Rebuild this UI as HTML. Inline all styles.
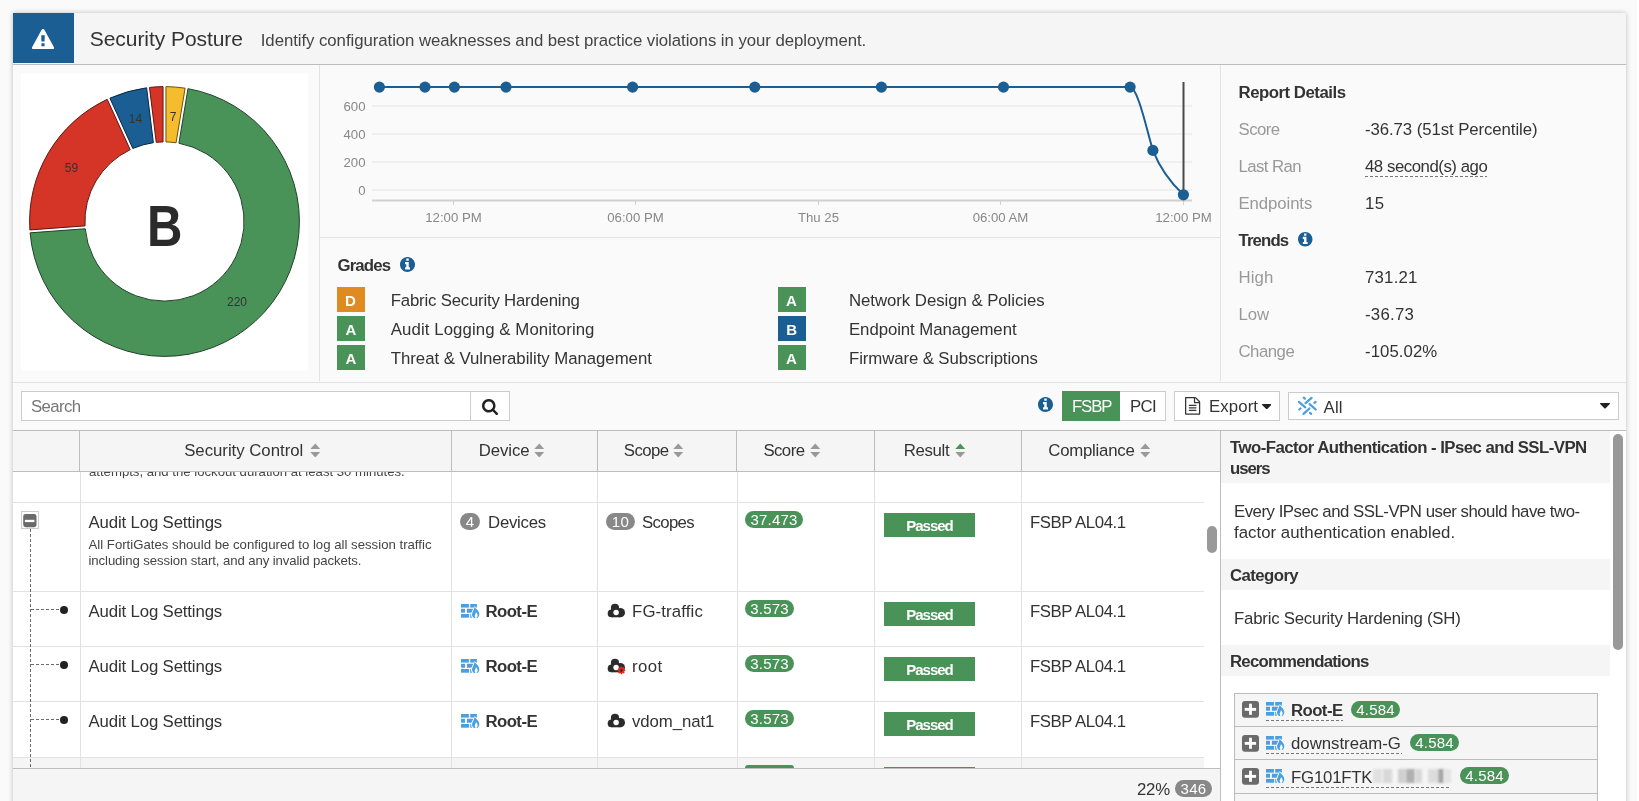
<!DOCTYPE html>
<html lang="en"><head><meta charset="utf-8"><title>Security Posture</title><style>
html,body{margin:0;padding:0;}
body{width:1639px;height:801px;overflow:hidden;background:#fafafa;font-family:"Liberation Sans",sans-serif;font-size:16.8px;color:#333;position:relative;}
.a{position:absolute;box-sizing:border-box;display:block;}
.t{position:absolute;white-space:nowrap;line-height:1;display:block;}
#w{position:absolute;left:0;top:0;width:1639px;height:801px;will-change:transform;}
</style></head>
<body>
<div id="w">
<div class="a" style="left:1637px;top:0px;width:2px;height:801px;background:#fff;"></div>
<div class="a" style="left:13px;top:13px;width:1613px;height:800px;background:#fafafa;box-shadow:0 0 5px rgba(0,0,0,.25);"></div>
<div class="a" style="left:13px;top:13px;width:1613px;height:51px;background:#f5f5f5;"></div>
<div class="a" style="left:13px;top:64px;width:1613px;height:1px;background:#bdbdbd;"></div>
<div class="a" style="left:13px;top:13px;width:61px;height:50px;background:#1a5e93;"></div>
<svg class="a" style="left:32px;top:29px;" width="22.00" height="20.43" viewBox="0 0 22.00 20.43"><path fill="#fff" transform="translate(-0.001,18.859) scale(0.01228,-0.01228)" d="M1024 161C1024 143 1010 128 992 128H800C782 128 768 143 768 161V351C768 369 782 384 800 384H992C1010 384 1024 369 1024 351V161ZM1022 535C1021 522 1006 512 988 512H803C784 512 769 522 769 535L752 992C752 998 755 1008 762 1013C768 1018 777 1024 786 1024H1006C1015 1024 1024 1018 1030 1013C1037 1008 1040 1000 1040 994ZM1008 1469C986 1510 943 1536 896 1536C849 1536 806 1510 784 1469L16 61C-6 22 -5 -26 18 -65C41 -104 83 -128 128 -128H1664C1709 -128 1751 -104 1774 -65C1797 -26 1798 22 1776 61Z"/></svg>
<span class="t" style="left:89.75px;top:28.00px;font-size:21px;letter-spacing:-0.055px;">Security Posture</span>
<span class="t" style="left:260.75px;top:33.00px;color:#444;letter-spacing:-0.056px;">Identify configuration weaknesses and best practice violations in your deployment.</span>
<div class="a" style="left:21px;top:73px;width:287px;height:298px;background:#fff;"></div>
<svg class="a" style="left:21px;top:73px;" width="287" height="297" viewBox="0 0 287 297"><path d="M144.95 13.61A134.9 134.9 0 0 1 164.10 15.18L155.07 69.75A79.6 79.6 0 0 0 144.95 68.91Z" fill="#f5bd2d" stroke="#6b520a" stroke-width="1"/><path d="M166.96 15.66A134.9 134.9 0 1 1 9.08 159.83L64.23 155.77A79.6 79.6 0 1 0 157.93 70.22Z" fill="#4a9358" stroke="#23402a" stroke-width="1"/><path d="M8.86 156.93A134.9 134.9 0 0 1 86.24 26.35L109.18 76.68A79.6 79.6 0 0 0 64.02 152.88Z" fill="#d43527" stroke="#5e1710" stroke-width="1"/><path d="M88.88 25.15A134.9 134.9 0 0 1 125.62 14.79L132.36 69.68A79.6 79.6 0 0 0 111.82 75.48Z" fill="#1a5e93" stroke="#0b2840" stroke-width="1"/><path d="M128.50 14.44A134.9 134.9 0 0 1 142.05 13.61L142.05 68.91A79.6 79.6 0 0 0 135.24 69.33Z" fill="#d43527" stroke="#5e1710" stroke-width="1"/></svg>
<span class="t" style="left:144.41px;top:198.00px;font-size:57px;font-weight:700;color:#2b2b2b;letter-spacing:0.000px;transform:scaleX(0.86);">B</span>
<span class="t" style="left:169.66px;top:111.00px;font-size:12px;letter-spacing:0.000px;">7</span>
<span class="t" style="left:128.82px;top:113.00px;font-size:12px;letter-spacing:0.000px;">14</span>
<span class="t" style="left:64.82px;top:162.00px;font-size:12px;letter-spacing:0.000px;">59</span>
<span class="t" style="left:226.98px;top:296.00px;font-size:12px;letter-spacing:0.000px;">220</span>
<div class="a" style="left:319px;top:65px;width:1px;height:316px;background:#e2e2e2;"></div>
<div class="a" style="left:1220px;top:65px;width:1px;height:316px;background:#e2e2e2;"></div>
<div class="a" style="left:320px;top:237px;width:900px;height:1px;background:#e2e2e2;"></div>
<div class="a" style="left:13px;top:382px;width:1613px;height:1px;background:#e2e2e2;"></div>
<svg class="a" style="left:320px;top:65px;" width="900" height="172" viewBox="0 0 900 172"><line x1="52" x2="872" y1="41" y2="41" stroke="#e4e4e4" stroke-width="1"/><line x1="52" x2="872" y1="69" y2="69" stroke="#e4e4e4" stroke-width="1"/><line x1="52" x2="872" y1="97" y2="97" stroke="#e4e4e4" stroke-width="1"/><line x1="52" x2="872" y1="125" y2="125" stroke="#e4e4e4" stroke-width="1"/><line x1="52" x2="872" y1="135.5" y2="135.5" stroke="#d0d0d0" stroke-width="2"/><line x1="133.5" x2="133.5" y1="136" y2="140" stroke="#d0d0d0" stroke-width="1"/><line x1="315.5" x2="315.5" y1="136" y2="140" stroke="#d0d0d0" stroke-width="1"/><line x1="498.5" x2="498.5" y1="136" y2="140" stroke="#d0d0d0" stroke-width="1"/><line x1="680.5" x2="680.5" y1="136" y2="140" stroke="#d0d0d0" stroke-width="1"/><line x1="863.5" x2="863.5" y1="136" y2="140" stroke="#d0d0d0" stroke-width="1"/><line x1="863.5" x2="863.5" y1="17" y2="135" stroke="#4a4a4a" stroke-width="2"/><path d="M59.4 22.1 L105.0 22.1 L134.4 22.1 L186.0 22.1 L312.6 22.1 L434.8 22.1 L561.4 22.1 L683.5 22.1 L810.1 22.1 C818 23.5 826 62 832.9000000000001 85.4 C841 106 853 120 863.4000000000001 129.8" fill="none" stroke="#1a5e93" stroke-width="2"/><circle cx="59.4" cy="22.1" r="5.6" fill="#1a5e93"/><circle cx="105.0" cy="22.1" r="5.6" fill="#1a5e93"/><circle cx="134.4" cy="22.1" r="5.6" fill="#1a5e93"/><circle cx="186.0" cy="22.1" r="5.6" fill="#1a5e93"/><circle cx="312.6" cy="22.1" r="5.6" fill="#1a5e93"/><circle cx="434.8" cy="22.1" r="5.6" fill="#1a5e93"/><circle cx="561.4" cy="22.1" r="5.6" fill="#1a5e93"/><circle cx="683.5" cy="22.1" r="5.6" fill="#1a5e93"/><circle cx="810.1" cy="22.1" r="5.6" fill="#1a5e93"/><circle cx="832.9" cy="85.4" r="5.6" fill="#1a5e93"/><circle cx="863.4" cy="129.8" r="5.6" fill="#1a5e93"/></svg>
<span class="t" style="left:343.48px;top:100.00px;font-size:13.2px;color:#888;letter-spacing:0.000px;">600</span>
<span class="t" style="left:343.48px;top:128.00px;font-size:13.2px;color:#888;letter-spacing:0.000px;">400</span>
<span class="t" style="left:343.48px;top:156.00px;font-size:13.2px;color:#888;letter-spacing:0.000px;">200</span>
<span class="t" style="left:358.16px;top:184.00px;font-size:13.2px;color:#888;letter-spacing:0.000px;">0</span>
<span class="t" style="left:425.27px;top:211.00px;font-size:13.2px;color:#888;letter-spacing:0.000px;">12:00 PM</span>
<span class="t" style="left:607.27px;top:211.00px;font-size:13.2px;color:#888;letter-spacing:0.000px;">06:00 PM</span>
<span class="t" style="left:797.97px;top:211.00px;font-size:13.2px;color:#888;letter-spacing:0.000px;">Thu 25</span>
<span class="t" style="left:972.64px;top:211.00px;font-size:13.2px;color:#888;letter-spacing:0.000px;">06:00 AM</span>
<span class="t" style="left:1155.27px;top:211.00px;font-size:13.2px;color:#888;letter-spacing:0.000px;">12:00 PM</span>
<span class="t" style="left:337.50px;top:258.00px;font-weight:700;letter-spacing:-0.875px;">Grades</span>
<svg class="a" style="left:400px;top:257.4px;" width="15.00" height="15.00" viewBox="0 0 15.00 15.00"><path fill="#1a5e93" transform="translate(0.000,13.750) scale(0.00977,-0.00977)" d="M1024 160C1024 142 1010 128 992 128H544C526 128 512 142 512 160V320C512 338 526 352 544 352H640V672H544C526 672 512 686 512 704V864C512 882 526 896 544 896H864C882 896 896 882 896 864V352H992C1010 352 1024 338 1024 320V160ZM896 1056C896 1038 882 1024 864 1024H672C654 1024 640 1038 640 1056V1216C640 1234 654 1248 672 1248H864C882 1248 896 1234 896 1216V1056ZM1536 640C1536 1064 1192 1408 768 1408C344 1408 0 1064 0 640C0 216 344 -128 768 -128C1192 -128 1536 216 1536 640Z"/></svg>
<div class="a" style="left:337px;top:287px;width:28px;height:25px;background:#e08a22;"></div>
<span class="t" style="left:345.09px;top:293.00px;font-size:15px;font-weight:700;color:#fff;letter-spacing:0.578px;">D</span>
<span class="t" style="left:390.80px;top:293.00px;letter-spacing:-0.206px;">Fabric Security Hardening</span>
<div class="a" style="left:337px;top:316px;width:28px;height:25px;background:#4a9358;"></div>
<span class="t" style="left:345.59px;top:322.00px;font-size:15px;font-weight:700;color:#fff;letter-spacing:-0.422px;">A</span>
<span class="t" style="left:390.80px;top:322.00px;letter-spacing:0.086px;">Audit Logging &amp; Monitoring</span>
<div class="a" style="left:337px;top:345px;width:28px;height:25px;background:#4a9358;"></div>
<span class="t" style="left:345.59px;top:351.00px;font-size:15px;font-weight:700;color:#fff;letter-spacing:-0.422px;">A</span>
<span class="t" style="left:390.80px;top:351.00px;letter-spacing:-0.043px;">Threat &amp; Vulnerability Management</span>
<div class="a" style="left:777.5px;top:287px;width:28px;height:25px;background:#4a9358;"></div>
<span class="t" style="left:786.09px;top:293.00px;font-size:15px;font-weight:700;color:#fff;letter-spacing:-0.422px;">A</span>
<span class="t" style="left:849.00px;top:293.00px;letter-spacing:-0.047px;">Network Design &amp; Policies</span>
<div class="a" style="left:777.5px;top:316px;width:28px;height:25px;background:#1a5e93;"></div>
<span class="t" style="left:786.35px;top:322.00px;font-size:15px;font-weight:700;color:#fff;letter-spacing:-0.953px;">B</span>
<span class="t" style="left:849.00px;top:322.00px;letter-spacing:-0.073px;">Endpoint Management</span>
<div class="a" style="left:777.5px;top:345px;width:28px;height:25px;background:#4a9358;"></div>
<span class="t" style="left:786.09px;top:351.00px;font-size:15px;font-weight:700;color:#fff;letter-spacing:-0.422px;">A</span>
<span class="t" style="left:849.00px;top:351.00px;letter-spacing:-0.098px;">Firmware &amp; Subscriptions</span>
<span class="t" style="left:1238.50px;top:85.00px;font-weight:700;letter-spacing:-0.480px;">Report Details</span>
<span class="t" style="left:1238.50px;top:122.00px;color:#999;letter-spacing:-0.556px;">Score</span>
<span class="t" style="left:1365.00px;top:122.00px;letter-spacing:-0.083px;">-36.73 (51st Percentile)</span>
<span class="t" style="left:1238.50px;top:159.00px;color:#999;letter-spacing:-0.566px;">Last Ran</span>
<span class="t" style="left:1365.00px;top:159.00px;letter-spacing:-0.459px;">48 second(s) ago</span>
<span class="t" style="left:1238.50px;top:196.00px;color:#999;letter-spacing:-0.104px;">Endpoints</span>
<span class="t" style="left:1365.00px;top:196.00px;letter-spacing:0.398px;">15</span>
<span class="t" style="left:1238.50px;top:270.00px;color:#999;letter-spacing:0.074px;">High</span>
<span class="t" style="left:1365.00px;top:270.00px;letter-spacing:0.219px;">731.21</span>
<span class="t" style="left:1238.50px;top:307.00px;color:#999;letter-spacing:-0.073px;">Low</span>
<span class="t" style="left:1365.00px;top:307.00px;letter-spacing:0.258px;">-36.73</span>
<span class="t" style="left:1238.50px;top:344.00px;color:#999;letter-spacing:-0.510px;">Change</span>
<span class="t" style="left:1365.00px;top:344.00px;letter-spacing:0.059px;">-105.02%</span>
<div class="a" style="left:1365px;top:176px;width:122px;height:1px;background:repeating-linear-gradient(to right,#777 0 3px,transparent 3px 5px);"></div>
<span class="t" style="left:1238.50px;top:233.00px;font-weight:700;letter-spacing:-0.885px;">Trends</span>
<svg class="a" style="left:1298px;top:232px;" width="14.50" height="14.50" viewBox="0 0 14.50 14.50"><path fill="#1a5e93" transform="translate(0.000,13.292) scale(0.00944,-0.00944)" d="M1024 160C1024 142 1010 128 992 128H544C526 128 512 142 512 160V320C512 338 526 352 544 352H640V672H544C526 672 512 686 512 704V864C512 882 526 896 544 896H864C882 896 896 882 896 864V352H992C1010 352 1024 338 1024 320V160ZM896 1056C896 1038 882 1024 864 1024H672C654 1024 640 1038 640 1056V1216C640 1234 654 1248 672 1248H864C882 1248 896 1234 896 1216V1056ZM1536 640C1536 1064 1192 1408 768 1408C344 1408 0 1064 0 640C0 216 344 -128 768 -128C1192 -128 1536 216 1536 640Z"/></svg>
<div class="a" style="left:21px;top:391px;width:450px;height:30px;background:#fff;border:1px solid #ccc;"></div>
<div class="a" style="left:470px;top:391px;width:40px;height:30px;background:#fff;border:1px solid #ccc;"></div>
<span class="t" style="left:31.00px;top:399.00px;color:#777;letter-spacing:-0.628px;">Search</span>
<svg class="a" style="left:482px;top:399px;" width="16.00" height="16.00" viewBox="0 0 16.00 16.00"><path fill="#222" transform="translate(0.000,13.538) scale(0.00962,-0.00962)" d="M1152 704C1152 457 951 256 704 256C457 256 256 457 256 704C256 951 457 1152 704 1152C951 1152 1152 951 1152 704ZM1664 -128C1664 -94 1650 -61 1627 -38L1284 305C1365 422 1408 562 1408 704C1408 1093 1093 1408 704 1408C315 1408 0 1093 0 704C0 315 315 0 704 0C846 0 986 43 1103 124L1446 -218C1469 -242 1502 -256 1536 -256C1606 -256 1664 -198 1664 -128Z"/></svg>
<svg class="a" style="left:1038px;top:397px;" width="15.00" height="15.00" viewBox="0 0 15.00 15.00"><path fill="#1a5e93" transform="translate(0.000,13.750) scale(0.00977,-0.00977)" d="M1024 160C1024 142 1010 128 992 128H544C526 128 512 142 512 160V320C512 338 526 352 544 352H640V672H544C526 672 512 686 512 704V864C512 882 526 896 544 896H864C882 896 896 882 896 864V352H992C1010 352 1024 338 1024 320V160ZM896 1056C896 1038 882 1024 864 1024H672C654 1024 640 1038 640 1056V1216C640 1234 654 1248 672 1248H864C882 1248 896 1234 896 1216V1056ZM1536 640C1536 1064 1192 1408 768 1408C344 1408 0 1064 0 640C0 216 344 -128 768 -128C1192 -128 1536 216 1536 640Z"/></svg>
<div class="a" style="left:1062px;top:391px;width:58px;height:30px;background:#4a9358;"></div>
<div class="a" style="left:1120px;top:391px;width:46px;height:30px;background:#fff;border:1px solid #ccc;border-left:none;"></div>
<span class="t" style="left:1072.00px;top:399.00px;color:#fff;letter-spacing:-1.148px;">FSBP</span>
<span class="t" style="left:1130.00px;top:399.00px;letter-spacing:-0.661px;">PCI</span>
<div class="a" style="left:1174px;top:391px;width:106px;height:30px;background:#fff;border:1px solid #ccc;"></div>
<svg class="a" style="left:1185.4px;top:397.2px;" width="15.26" height="17.80" viewBox="0 0 15.26 17.80"><path fill="#333" transform="translate(0.000,15.257) scale(0.00993,-0.00993)" d="M1468 1156 1156 1468C1119 1505 1045 1536 992 1536H96C43 1536 0 1493 0 1440V-160C0 -213 43 -256 96 -256H1440C1493 -256 1536 -213 1536 -160V992C1536 1045 1505 1119 1468 1156ZM1024 1400C1041 1394 1058 1385 1065 1378L1378 1065C1385 1058 1394 1041 1400 1024H1024ZM1408 -128H128V1408H896V992C896 939 939 896 992 896H1408ZM384 736V672C384 654 398 640 416 640H1120C1138 640 1152 654 1152 672V736C1152 754 1138 768 1120 768H416C398 768 384 754 384 736ZM1120 512H416C398 512 384 498 384 480V416C384 398 398 384 416 384H1120C1138 384 1152 398 1152 416V480C1152 498 1138 512 1120 512ZM1120 256H416C398 256 384 242 384 224V160C384 142 398 128 416 128H1120C1138 128 1152 142 1152 160V224C1152 242 1138 256 1120 256Z"/></svg>
<span class="t" style="left:1209.00px;top:399.00px;letter-spacing:0.099px;">Export</span>
<svg class="a" style="left:1261.5px;top:404px;" width="9.50" height="5.34" viewBox="0 0 9.50 5.34"><path fill="#222" transform="translate(0.000,8.312) scale(0.00928,-0.00928)" d="M1024 832C1024 867 995 896 960 896H64C29 896 0 867 0 832C0 815 7 799 19 787L467 339C479 327 495 320 512 320C529 320 545 327 557 339L1005 787C1017 799 1024 815 1024 832Z"/></svg>
<div class="a" style="left:1288px;top:392px;width:331px;height:28px;background:#fff;border:1px solid #ccc;"></div>
<svg class="a" style="left:1296px;top:395px;" width="24" height="22" viewBox="0 0 24 22"><line x1="9.5" y1="8.1" x2="15.6" y2="2.8" stroke="#4a9fe0" stroke-width="2.2" stroke-linecap="round"/><line x1="2.9" y1="6.9" x2="9.3" y2="12.3" stroke="#4a9fe0" stroke-width="2.2" stroke-linecap="round"/><line x1="13.6" y1="9.1" x2="19.7" y2="14.5" stroke="#4a9fe0" stroke-width="2.2" stroke-linecap="round"/><line x1="7.5" y1="18.9" x2="13.4" y2="13.5" stroke="#4a9fe0" stroke-width="2.2" stroke-linecap="round"/><line x1="7.7" y1="2.7" x2="8.9" y2="3.7" stroke="#4a9fe0" stroke-width="2.2" stroke-linecap="round"/><line x1="18.4" y1="7.9" x2="19.6" y2="6.9" stroke="#4a9fe0" stroke-width="2.2" stroke-linecap="round"/><line x1="3.3" y1="14.5" x2="4.5" y2="13.5" stroke="#4a9fe0" stroke-width="2.2" stroke-linecap="round"/><line x1="14.0" y1="17.9" x2="15.2" y2="18.9" stroke="#4a9fe0" stroke-width="2.2" stroke-linecap="round"/></svg>
<span class="t" style="left:1323.50px;top:400.00px;letter-spacing:0.198px;">All</span>
<svg class="a" style="left:1600px;top:403px;" width="10.00" height="5.62" viewBox="0 0 10.00 5.62"><path fill="#222" transform="translate(0.000,8.750) scale(0.00977,-0.00977)" d="M1024 832C1024 867 995 896 960 896H64C29 896 0 867 0 832C0 815 7 799 19 787L467 339C479 327 495 320 512 320C529 320 545 327 557 339L1005 787C1017 799 1024 815 1024 832Z"/></svg>
<div class="a" style="left:13px;top:430px;width:1613px;height:1px;background:#bdbdbd;"></div>
<div class="a" style="left:13px;top:431px;width:1208px;height:40px;background:#f5f5f5;"></div>
<div class="a" style="left:13px;top:471px;width:1208px;height:1px;background:#bdbdbd;"></div>
<div class="a" style="left:13px;top:472px;width:1207px;height:296px;background:#fff;"></div>
<div class="a" style="left:13px;top:758px;width:1191px;height:10px;background:#f5f5f5;"></div>
<div class="a" style="left:79px;top:431px;width:1px;height:40px;background:#bdbdbd;"></div>
<div class="a" style="left:80px;top:472px;width:1px;height:296px;background:#e2e2e2;"></div>
<div class="a" style="left:451px;top:431px;width:1px;height:40px;background:#bdbdbd;"></div>
<div class="a" style="left:451px;top:472px;width:1px;height:296px;background:#e2e2e2;"></div>
<div class="a" style="left:597px;top:431px;width:1px;height:40px;background:#bdbdbd;"></div>
<div class="a" style="left:597px;top:472px;width:1px;height:296px;background:#e2e2e2;"></div>
<div class="a" style="left:736px;top:431px;width:1px;height:40px;background:#bdbdbd;"></div>
<div class="a" style="left:737px;top:472px;width:1px;height:296px;background:#e2e2e2;"></div>
<div class="a" style="left:874px;top:431px;width:1px;height:40px;background:#bdbdbd;"></div>
<div class="a" style="left:874px;top:472px;width:1px;height:296px;background:#e2e2e2;"></div>
<div class="a" style="left:1021px;top:431px;width:1px;height:40px;background:#bdbdbd;"></div>
<div class="a" style="left:1021px;top:472px;width:1px;height:296px;background:#e2e2e2;"></div>
<div class="a" style="left:1220px;top:431px;width:1px;height:370px;background:#bdbdbd;"></div>
<div class="a" style="left:13px;top:502px;width:1191px;height:1px;background:#e2e2e2;"></div>
<div class="a" style="left:13px;top:591px;width:1191px;height:1px;background:#e2e2e2;"></div>
<div class="a" style="left:13px;top:646px;width:1191px;height:1px;background:#e2e2e2;"></div>
<div class="a" style="left:13px;top:701px;width:1191px;height:1px;background:#e2e2e2;"></div>
<div class="a" style="left:13px;top:757px;width:1191px;height:1px;background:#e2e2e2;"></div>
<span class="t" style="left:184.20px;top:443.00px;letter-spacing:-0.022px;">Security Control</span>
<svg class="a" style="left:310.3px;top:443px;" width="11" height="15" viewBox="0 0 11 15"><path d="M0.3 6L5.25 0.4L10.2 6Z" fill="#999"/><path d="M0.3 9L5.25 14.6L10.2 9Z" fill="#999"/></svg>
<span class="t" style="left:478.70px;top:443.00px;letter-spacing:-0.094px;">Device</span>
<svg class="a" style="left:533.6px;top:443px;" width="11" height="15" viewBox="0 0 11 15"><path d="M0.3 6L5.25 0.4L10.2 6Z" fill="#999"/><path d="M0.3 9L5.25 14.6L10.2 9Z" fill="#999"/></svg>
<span class="t" style="left:623.80px;top:443.00px;letter-spacing:-0.578px;">Scope</span>
<svg class="a" style="left:673px;top:443px;" width="11" height="15" viewBox="0 0 11 15"><path d="M0.3 6L5.25 0.4L10.2 6Z" fill="#999"/><path d="M0.3 9L5.25 14.6L10.2 9Z" fill="#999"/></svg>
<span class="t" style="left:763.40px;top:443.00px;letter-spacing:-0.556px;">Score</span>
<svg class="a" style="left:810px;top:443px;" width="11" height="15" viewBox="0 0 11 15"><path d="M0.3 6L5.25 0.4L10.2 6Z" fill="#999"/><path d="M0.3 9L5.25 14.6L10.2 9Z" fill="#999"/></svg>
<span class="t" style="left:903.80px;top:443.00px;letter-spacing:-0.357px;">Result</span>
<svg class="a" style="left:954.8px;top:443px;" width="11" height="15" viewBox="0 0 11 15"><path d="M0.3 6L5.25 0.4L10.2 6Z" fill="#4a9358"/><path d="M0.3 9L5.25 14.6L10.2 9Z" fill="#999"/></svg>
<span class="t" style="left:1048.30px;top:443.00px;letter-spacing:-0.244px;">Compliance</span>
<svg class="a" style="left:1140.2px;top:443px;" width="11" height="15" viewBox="0 0 11 15"><path d="M0.3 6L5.25 0.4L10.2 6Z" fill="#999"/><path d="M0.3 9L5.25 14.6L10.2 9Z" fill="#999"/></svg>
<span class="t" style="left:89.00px;top:465.00px;font-size:13.2px;color:#444;letter-spacing:-0.017px;clip-path:inset(7px 0 0 0);">attempts, and the lockout duration at least 30 minutes.</span>
<svg class="a" style="left:21px;top:511px;" width="18" height="18" viewBox="0 0 18 18"><rect x="0.5" y="0.5" width="17" height="17" fill="#fff" stroke="#ccc"/><rect x="2.2" y="3.1" width="13.3" height="13.1" rx="2.4" fill="#6a6a6a"/><rect x="3.9" y="8.8" width="9.5" height="2.3" fill="#fff"/></svg>
<div class="a" style="left:30px;top:529px;width:1px;height:239px;background:repeating-linear-gradient(to bottom,#6a6a6a 0 3px,transparent 3px 5px);"></div>
<div class="a" style="left:31px;top:609px;width:29px;height:1px;background:repeating-linear-gradient(to right,#6a6a6a 0 3px,transparent 3px 5px);"></div>
<div class="a" style="left:60px;top:605.5px;width:8px;height:8px;background:#222;border-radius:4px;"></div>
<div class="a" style="left:31px;top:664px;width:29px;height:1px;background:repeating-linear-gradient(to right,#6a6a6a 0 3px,transparent 3px 5px);"></div>
<div class="a" style="left:60px;top:660.5px;width:8px;height:8px;background:#222;border-radius:4px;"></div>
<div class="a" style="left:31px;top:719px;width:29px;height:1px;background:repeating-linear-gradient(to right,#6a6a6a 0 3px,transparent 3px 5px);"></div>
<div class="a" style="left:60px;top:715.5px;width:8px;height:8px;background:#222;border-radius:4px;"></div>
<span class="t" style="left:88.50px;top:515.00px;letter-spacing:-0.147px;">Audit Log Settings</span>
<span class="t" style="left:88.50px;top:538.00px;font-size:13.2px;color:#444;letter-spacing:0.003px;">All FortiGates should be configured to log all session traffic</span>
<span class="t" style="left:88.50px;top:554.00px;font-size:13.2px;color:#444;letter-spacing:-0.103px;">including session start, and any invalid packets.</span>
<div class="a" style="left:460px;top:513px;width:20px;height:17px;background:#888;border-radius:8.5px;"></div>
<span class="t" style="left:465.65px;top:514.00px;font-size:15px;color:#fff;letter-spacing:0.359px;">4</span>
<span class="t" style="left:488.00px;top:515.00px;letter-spacing:-0.241px;">Devices</span>
<div class="a" style="left:606px;top:513px;width:29px;height:17px;background:#888;border-radius:8.5px;"></div>
<span class="t" style="left:611.80px;top:514.00px;font-size:15px;color:#fff;letter-spacing:0.359px;">10</span>
<span class="t" style="left:642.00px;top:515.00px;letter-spacing:-0.669px;">Scopes</span>
<div class="a" style="left:745px;top:511px;width:58px;height:17px;background:#4a9358;border-radius:8.5px;"></div>
<span class="t" style="left:750.48px;top:512.00px;font-size:15px;color:#fff;letter-spacing:0.193px;">37.473</span>
<div class="a" style="left:884px;top:513px;width:91px;height:24px;background:#4a9358;"></div>
<span class="t" style="left:906.31px;top:518.00px;font-size:15px;font-weight:700;color:#fff;letter-spacing:-1.029px;">Passed</span>
<span class="t" style="left:1030.00px;top:515.00px;letter-spacing:-0.436px;">FSBP AL04.1</span>
<span class="t" style="left:88.50px;top:604.00px;letter-spacing:-0.147px;">Audit Log Settings</span>
<svg class="a" style="left:460.9px;top:604.1px;" width="19" height="14" viewBox="0 0 19 14"><g fill="#4a9fe0"><rect x="0" y="0" width="7.9" height="3.6"/><rect x="9.2" y="0" width="6.7" height="3.6"/><rect x="0" y="4.8" width="4" height="3.9"/><path d="M5.9 4.8H12.3L10.4 8.7H5.9Z"/><rect x="0" y="10" width="8.1" height="3.7"/><path d="M9.2 10H10.2C10.1 11.6 10.4 12.8 11.2 13.7H9.2Z"/></g><path d="M13.7 3.1C14.9 4.8 18.3 7 18.3 10.3C18.3 12 17.5 13.2 16.4 13.9H12.9C11.8 13.2 11 12.1 11 10.6C11 8.4 12.9 6.6 13.7 2.6Z" fill="#4a9fe0" stroke="#fff" stroke-width="1.1" paint-order="stroke"/><path d="M14.6 13.9C13.5 12.9 13.5 11.4 14.2 10.3C14.7 9.5 15 8.8 14.9 8C16.2 9.1 16.9 10.6 16.6 12.1C16.4 13 15.9 13.5 15.4 13.9Z" fill="#fff"/></svg>
<span class="t" style="left:485.50px;top:604.00px;font-weight:700;letter-spacing:-0.583px;">Root-E</span>
<svg class="a" style="left:607px;top:603px;" width="19" height="17" viewBox="0 0 19 17"><g fill="#2b2b2b"><circle cx="8" cy="4.9" r="4.1"/><circle cx="4.55" cy="10.45" r="3.85"/><circle cx="13.35" cy="9.65" r="4.65"/><rect x="4.55" y="6.5" width="8.8" height="7.8"/></g><circle cx="9.1" cy="9.6" r="2.75" fill="#fff"/></svg>
<span class="t" style="left:632.00px;top:604.00px;letter-spacing:0.138px;">FG-traffic</span>
<div class="a" style="left:745px;top:600px;width:49px;height:17px;background:#4a9358;border-radius:8.5px;"></div>
<span class="t" style="left:750.33px;top:601.00px;font-size:15px;color:#fff;letter-spacing:0.159px;">3.573</span>
<div class="a" style="left:884px;top:602px;width:91px;height:24px;background:#4a9358;"></div>
<span class="t" style="left:906.31px;top:607.00px;font-size:15px;font-weight:700;color:#fff;letter-spacing:-1.029px;">Passed</span>
<span class="t" style="left:1030.00px;top:604.00px;letter-spacing:-0.436px;">FSBP AL04.1</span>
<span class="t" style="left:88.50px;top:659.00px;letter-spacing:-0.147px;">Audit Log Settings</span>
<svg class="a" style="left:460.9px;top:659.1px;" width="19" height="14" viewBox="0 0 19 14"><g fill="#4a9fe0"><rect x="0" y="0" width="7.9" height="3.6"/><rect x="9.2" y="0" width="6.7" height="3.6"/><rect x="0" y="4.8" width="4" height="3.9"/><path d="M5.9 4.8H12.3L10.4 8.7H5.9Z"/><rect x="0" y="10" width="8.1" height="3.7"/><path d="M9.2 10H10.2C10.1 11.6 10.4 12.8 11.2 13.7H9.2Z"/></g><path d="M13.7 3.1C14.9 4.8 18.3 7 18.3 10.3C18.3 12 17.5 13.2 16.4 13.9H12.9C11.8 13.2 11 12.1 11 10.6C11 8.4 12.9 6.6 13.7 2.6Z" fill="#4a9fe0" stroke="#fff" stroke-width="1.1" paint-order="stroke"/><path d="M14.6 13.9C13.5 12.9 13.5 11.4 14.2 10.3C14.7 9.5 15 8.8 14.9 8C16.2 9.1 16.9 10.6 16.6 12.1C16.4 13 15.9 13.5 15.4 13.9Z" fill="#fff"/></svg>
<span class="t" style="left:485.50px;top:659.00px;font-weight:700;letter-spacing:-0.583px;">Root-E</span>
<svg class="a" style="left:607px;top:658px;" width="19" height="17" viewBox="0 0 19 17"><g fill="#2b2b2b"><circle cx="8" cy="4.9" r="4.1"/><circle cx="4.55" cy="10.45" r="3.85"/><circle cx="13.35" cy="9.65" r="4.65"/><rect x="4.55" y="6.5" width="8.8" height="7.8"/></g><circle cx="9.1" cy="9.6" r="2.75" fill="#fff"/><circle cx="14.4" cy="12.4" r="1.2" fill="#2b2b2b"/><path fill="#e02d20" transform="translate(10.50,15.650) scale(0.00508,-0.00508)" d="M1024 640C1024 499 909 384 768 384C627 384 512 499 512 640C512 781 627 896 768 896C909 896 1024 781 1024 640ZM1536 749C1536 766 1524 782 1507 785L1324 813C1314 846 1300 879 1283 911C1317 958 1354 1002 1388 1048C1393 1055 1396 1062 1396 1071C1396 1079 1394 1087 1389 1093C1347 1152 1277 1214 1224 1263C1217 1269 1208 1273 1199 1273C1190 1273 1181 1270 1175 1264L1033 1157C1004 1172 974 1184 943 1194L915 1378C913 1395 897 1408 879 1408H657C639 1408 625 1396 621 1380C605 1320 599 1255 592 1194C561 1184 530 1171 501 1156L363 1263C355 1269 346 1273 337 1273C303 1273 168 1127 144 1094C139 1087 135 1080 135 1071C135 1062 139 1054 145 1047C182 1002 218 957 252 909C236 879 223 849 213 817L27 789C12 786 0 768 0 753V531C0 514 12 498 29 495L212 468C222 434 236 401 253 369C219 322 182 278 148 232C143 225 140 218 140 209C140 201 142 193 147 186C189 128 259 66 312 18C319 11 328 7 337 7C346 7 355 10 362 16L503 123C532 108 562 96 593 86L621 -98C623 -115 639 -128 657 -128H879C897 -128 911 -116 915 -100C931 -40 937 25 944 86C975 96 1006 109 1035 124L1173 16C1181 11 1190 7 1199 7C1233 7 1368 154 1392 186C1398 193 1401 200 1401 209C1401 218 1397 227 1391 234C1354 279 1318 323 1284 372C1300 401 1312 431 1323 463L1508 491C1524 494 1536 512 1536 527Z"/></svg>
<span class="t" style="left:632.00px;top:659.00px;letter-spacing:0.438px;">root</span>
<div class="a" style="left:745px;top:655px;width:49px;height:17px;background:#4a9358;border-radius:8.5px;"></div>
<span class="t" style="left:750.33px;top:656.00px;font-size:15px;color:#fff;letter-spacing:0.159px;">3.573</span>
<div class="a" style="left:884px;top:657px;width:91px;height:24px;background:#4a9358;"></div>
<span class="t" style="left:906.31px;top:662.00px;font-size:15px;font-weight:700;color:#fff;letter-spacing:-1.029px;">Passed</span>
<span class="t" style="left:1030.00px;top:659.00px;letter-spacing:-0.436px;">FSBP AL04.1</span>
<span class="t" style="left:88.50px;top:714.00px;letter-spacing:-0.147px;">Audit Log Settings</span>
<svg class="a" style="left:460.9px;top:714.1px;" width="19" height="14" viewBox="0 0 19 14"><g fill="#4a9fe0"><rect x="0" y="0" width="7.9" height="3.6"/><rect x="9.2" y="0" width="6.7" height="3.6"/><rect x="0" y="4.8" width="4" height="3.9"/><path d="M5.9 4.8H12.3L10.4 8.7H5.9Z"/><rect x="0" y="10" width="8.1" height="3.7"/><path d="M9.2 10H10.2C10.1 11.6 10.4 12.8 11.2 13.7H9.2Z"/></g><path d="M13.7 3.1C14.9 4.8 18.3 7 18.3 10.3C18.3 12 17.5 13.2 16.4 13.9H12.9C11.8 13.2 11 12.1 11 10.6C11 8.4 12.9 6.6 13.7 2.6Z" fill="#4a9fe0" stroke="#fff" stroke-width="1.1" paint-order="stroke"/><path d="M14.6 13.9C13.5 12.9 13.5 11.4 14.2 10.3C14.7 9.5 15 8.8 14.9 8C16.2 9.1 16.9 10.6 16.6 12.1C16.4 13 15.9 13.5 15.4 13.9Z" fill="#fff"/></svg>
<span class="t" style="left:485.50px;top:714.00px;font-weight:700;letter-spacing:-0.583px;">Root-E</span>
<svg class="a" style="left:607px;top:713px;" width="19" height="17" viewBox="0 0 19 17"><g fill="#2b2b2b"><circle cx="8" cy="4.9" r="4.1"/><circle cx="4.55" cy="10.45" r="3.85"/><circle cx="13.35" cy="9.65" r="4.65"/><rect x="4.55" y="6.5" width="8.8" height="7.8"/></g><circle cx="9.1" cy="9.6" r="2.75" fill="#fff"/></svg>
<span class="t" style="left:632.00px;top:714.00px;letter-spacing:-0.094px;">vdom_nat1</span>
<div class="a" style="left:745px;top:710px;width:49px;height:17px;background:#4a9358;border-radius:8.5px;"></div>
<span class="t" style="left:750.33px;top:711.00px;font-size:15px;color:#fff;letter-spacing:0.159px;">3.573</span>
<div class="a" style="left:884px;top:712px;width:91px;height:24px;background:#4a9358;"></div>
<span class="t" style="left:906.31px;top:717.00px;font-size:15px;font-weight:700;color:#fff;letter-spacing:-1.029px;">Passed</span>
<span class="t" style="left:1030.00px;top:714.00px;letter-spacing:-0.436px;">FSBP AL04.1</span>
<div class="a" style="left:745px;top:765px;width:49px;height:3px;background:#4a9358;border-radius:3px 3px 0 0;"></div>
<div class="a" style="left:884px;top:767px;width:91px;height:1px;background:#4a9358;"></div>
<div class="a" style="left:1207px;top:526px;width:10px;height:27px;background:#999;border-radius:5px;"></div>
<div class="a" style="left:13px;top:768px;width:1208px;height:1px;background:#bdbdbd;"></div>
<div class="a" style="left:13px;top:769px;width:1207px;height:32px;background:#f5f5f5;"></div>
<span class="t" style="left:1137.00px;top:782.00px;letter-spacing:-0.224px;">22%</span>
<div class="a" style="left:1175px;top:780px;width:37px;height:17px;background:#888;border-radius:8.5px;"></div>
<span class="t" style="left:1180.45px;top:781.00px;font-size:15px;color:#fff;letter-spacing:0.359px;">346</span>
<div class="a" style="left:1221px;top:431px;width:405px;height:370px;background:#fff;"></div>
<div class="a" style="left:1221px;top:431px;width:389px;height:52px;background:#f5f5f5;"></div>
<span class="t" style="left:1230.00px;top:440.00px;font-weight:700;letter-spacing:-0.550px;">Two-Factor Authentication - IPsec and SSL-VPN</span>
<span class="t" style="left:1230.00px;top:461.00px;font-weight:700;letter-spacing:-1.072px;">users</span>
<span class="t" style="left:1234.00px;top:504.00px;letter-spacing:-0.487px;">Every IPsec and SSL-VPN user should have two-</span>
<span class="t" style="left:1234.00px;top:525.00px;letter-spacing:0.032px;">factor authentication enabled.</span>
<div class="a" style="left:1221px;top:559px;width:389px;height:31px;background:#f5f5f5;"></div>
<span class="t" style="left:1230.00px;top:568.00px;font-weight:700;letter-spacing:-0.580px;">Category</span>
<span class="t" style="left:1234.00px;top:611.00px;letter-spacing:-0.219px;">Fabric Security Hardening (SH)</span>
<div class="a" style="left:1221px;top:645px;width:389px;height:31px;background:#f5f5f5;"></div>
<span class="t" style="left:1230.00px;top:654.00px;font-weight:700;letter-spacing:-0.775px;">Recommendations</span>
<div class="a" style="left:1613px;top:434px;width:10px;height:216px;background:#999;border-radius:5px;"></div>
<div class="a" style="left:1234px;top:693px;width:364px;height:110px;background:#f5f5f5;border:1px solid #bbb;"></div>
<div class="a" style="left:1234px;top:726px;width:364px;height:1px;background:#bbb;"></div>
<div class="a" style="left:1234px;top:759px;width:364px;height:1px;background:#bbb;"></div>
<div class="a" style="left:1234px;top:793px;width:364px;height:1px;background:#bbb;"></div>
<svg class="a" style="left:1242px;top:701.2px;" width="17" height="17" viewBox="0 0 17 17"><rect x="0" y="0" width="17" height="16.7" rx="3" fill="#6a6a6a"/><rect x="2.7" y="6.9" width="11.4" height="2.9" fill="#fff"/><rect x="7.1" y="2.7" width="2.8" height="11.1" fill="#fff"/></svg>
<svg class="a" style="left:1266.2px;top:702.1px;" width="19" height="14" viewBox="0 0 19 14"><g fill="#4a9fe0"><rect x="0" y="0" width="7.9" height="3.6"/><rect x="9.2" y="0" width="6.7" height="3.6"/><rect x="0" y="4.8" width="4" height="3.9"/><path d="M5.9 4.8H12.3L10.4 8.7H5.9Z"/><rect x="0" y="10" width="8.1" height="3.7"/><path d="M9.2 10H10.2C10.1 11.6 10.4 12.8 11.2 13.7H9.2Z"/></g><path d="M13.7 3.1C14.9 4.8 18.3 7 18.3 10.3C18.3 12 17.5 13.2 16.4 13.9H12.9C11.8 13.2 11 12.1 11 10.6C11 8.4 12.9 6.6 13.7 2.6Z" fill="#4a9fe0" stroke="#fff" stroke-width="1.1" paint-order="stroke"/><path d="M14.6 13.9C13.5 12.9 13.5 11.4 14.2 10.3C14.7 9.5 15 8.8 14.9 8C16.2 9.1 16.9 10.6 16.6 12.1C16.4 13 15.9 13.5 15.4 13.9Z" fill="#fff"/></svg>
<span class="t" style="left:1291.00px;top:703.00px;font-weight:700;letter-spacing:-0.583px;">Root-E</span>
<div class="a" style="left:1266px;top:720px;width:77px;height:1px;background:repeating-linear-gradient(to right,#777 0 3px,transparent 3px 5px);"></div>
<div class="a" style="left:1351px;top:701px;width:49px;height:17px;background:#4a9358;border-radius:8.5px;"></div>
<span class="t" style="left:1356.33px;top:702.00px;font-size:15px;color:#fff;letter-spacing:0.159px;">4.584</span>
<svg class="a" style="left:1242px;top:735.1px;" width="17" height="17" viewBox="0 0 17 17"><rect x="0" y="0" width="17" height="16.7" rx="3" fill="#6a6a6a"/><rect x="2.7" y="6.9" width="11.4" height="2.9" fill="#fff"/><rect x="7.1" y="2.7" width="2.8" height="11.1" fill="#fff"/></svg>
<svg class="a" style="left:1266.2px;top:736.0px;" width="19" height="14" viewBox="0 0 19 14"><g fill="#4a9fe0"><rect x="0" y="0" width="7.9" height="3.6"/><rect x="9.2" y="0" width="6.7" height="3.6"/><rect x="0" y="4.8" width="4" height="3.9"/><path d="M5.9 4.8H12.3L10.4 8.7H5.9Z"/><rect x="0" y="10" width="8.1" height="3.7"/><path d="M9.2 10H10.2C10.1 11.6 10.4 12.8 11.2 13.7H9.2Z"/></g><path d="M13.7 3.1C14.9 4.8 18.3 7 18.3 10.3C18.3 12 17.5 13.2 16.4 13.9H12.9C11.8 13.2 11 12.1 11 10.6C11 8.4 12.9 6.6 13.7 2.6Z" fill="#4a9fe0" stroke="#fff" stroke-width="1.1" paint-order="stroke"/><path d="M14.6 13.9C13.5 12.9 13.5 11.4 14.2 10.3C14.7 9.5 15 8.8 14.9 8C16.2 9.1 16.9 10.6 16.6 12.1C16.4 13 15.9 13.5 15.4 13.9Z" fill="#fff"/></svg>
<span class="t" style="left:1291.00px;top:736.00px;letter-spacing:-0.013px;">downstream-G</span>
<div class="a" style="left:1266px;top:753px;width:136px;height:1px;background:repeating-linear-gradient(to right,#777 0 3px,transparent 3px 5px);"></div>
<div class="a" style="left:1410px;top:734px;width:49px;height:17px;background:#4a9358;border-radius:8.5px;"></div>
<span class="t" style="left:1415.33px;top:735.00px;font-size:15px;color:#fff;letter-spacing:0.159px;">4.584</span>
<svg class="a" style="left:1242px;top:768.4px;" width="17" height="17" viewBox="0 0 17 17"><rect x="0" y="0" width="17" height="16.7" rx="3" fill="#6a6a6a"/><rect x="2.7" y="6.9" width="11.4" height="2.9" fill="#fff"/><rect x="7.1" y="2.7" width="2.8" height="11.1" fill="#fff"/></svg>
<svg class="a" style="left:1266.2px;top:769.3px;" width="19" height="14" viewBox="0 0 19 14"><g fill="#4a9fe0"><rect x="0" y="0" width="7.9" height="3.6"/><rect x="9.2" y="0" width="6.7" height="3.6"/><rect x="0" y="4.8" width="4" height="3.9"/><path d="M5.9 4.8H12.3L10.4 8.7H5.9Z"/><rect x="0" y="10" width="8.1" height="3.7"/><path d="M9.2 10H10.2C10.1 11.6 10.4 12.8 11.2 13.7H9.2Z"/></g><path d="M13.7 3.1C14.9 4.8 18.3 7 18.3 10.3C18.3 12 17.5 13.2 16.4 13.9H12.9C11.8 13.2 11 12.1 11 10.6C11 8.4 12.9 6.6 13.7 2.6Z" fill="#4a9fe0" stroke="#fff" stroke-width="1.1" paint-order="stroke"/><path d="M14.6 13.9C13.5 12.9 13.5 11.4 14.2 10.3C14.7 9.5 15 8.8 14.9 8C16.2 9.1 16.9 10.6 16.6 12.1C16.4 13 15.9 13.5 15.4 13.9Z" fill="#fff"/></svg>
<span class="t" style="left:1291.00px;top:770.00px;letter-spacing:-0.205px;">FG101FTK</span>
<div class="a" style="left:1266px;top:787px;width:185px;height:1px;background:repeating-linear-gradient(to right,#777 0 3px,transparent 3px 5px);"></div>
<div class="a" style="left:1460px;top:767px;width:49px;height:17px;background:#4a9358;border-radius:8.5px;"></div>
<span class="t" style="left:1465.33px;top:768.00px;font-size:15px;color:#fff;letter-spacing:0.159px;">4.584</span>
<div class="a" style="left:1373px;top:769px;width:9px;height:14px;background:#e0e0e0;filter:blur(1px);"></div>
<div class="a" style="left:1383px;top:769px;width:9px;height:14px;background:#d8d8d8;filter:blur(1px);"></div>
<div class="a" style="left:1398px;top:769px;width:8px;height:14px;background:#cfcfcf;filter:blur(1px);"></div>
<div class="a" style="left:1406px;top:769px;width:9px;height:14px;background:#b0b0b0;filter:blur(1px);"></div>
<div class="a" style="left:1415px;top:769px;width:7px;height:14px;background:#d8d8d8;filter:blur(1px);"></div>
<div class="a" style="left:1428px;top:769px;width:10px;height:14px;background:#dcdcdc;filter:blur(1px);"></div>
<div class="a" style="left:1438px;top:769px;width:6px;height:14px;background:#a8a8a8;filter:blur(1px);"></div>
<div class="a" style="left:1444px;top:769px;width:7px;height:14px;background:#e4e4e4;filter:blur(1px);"></div>
</div>
</body></html>
